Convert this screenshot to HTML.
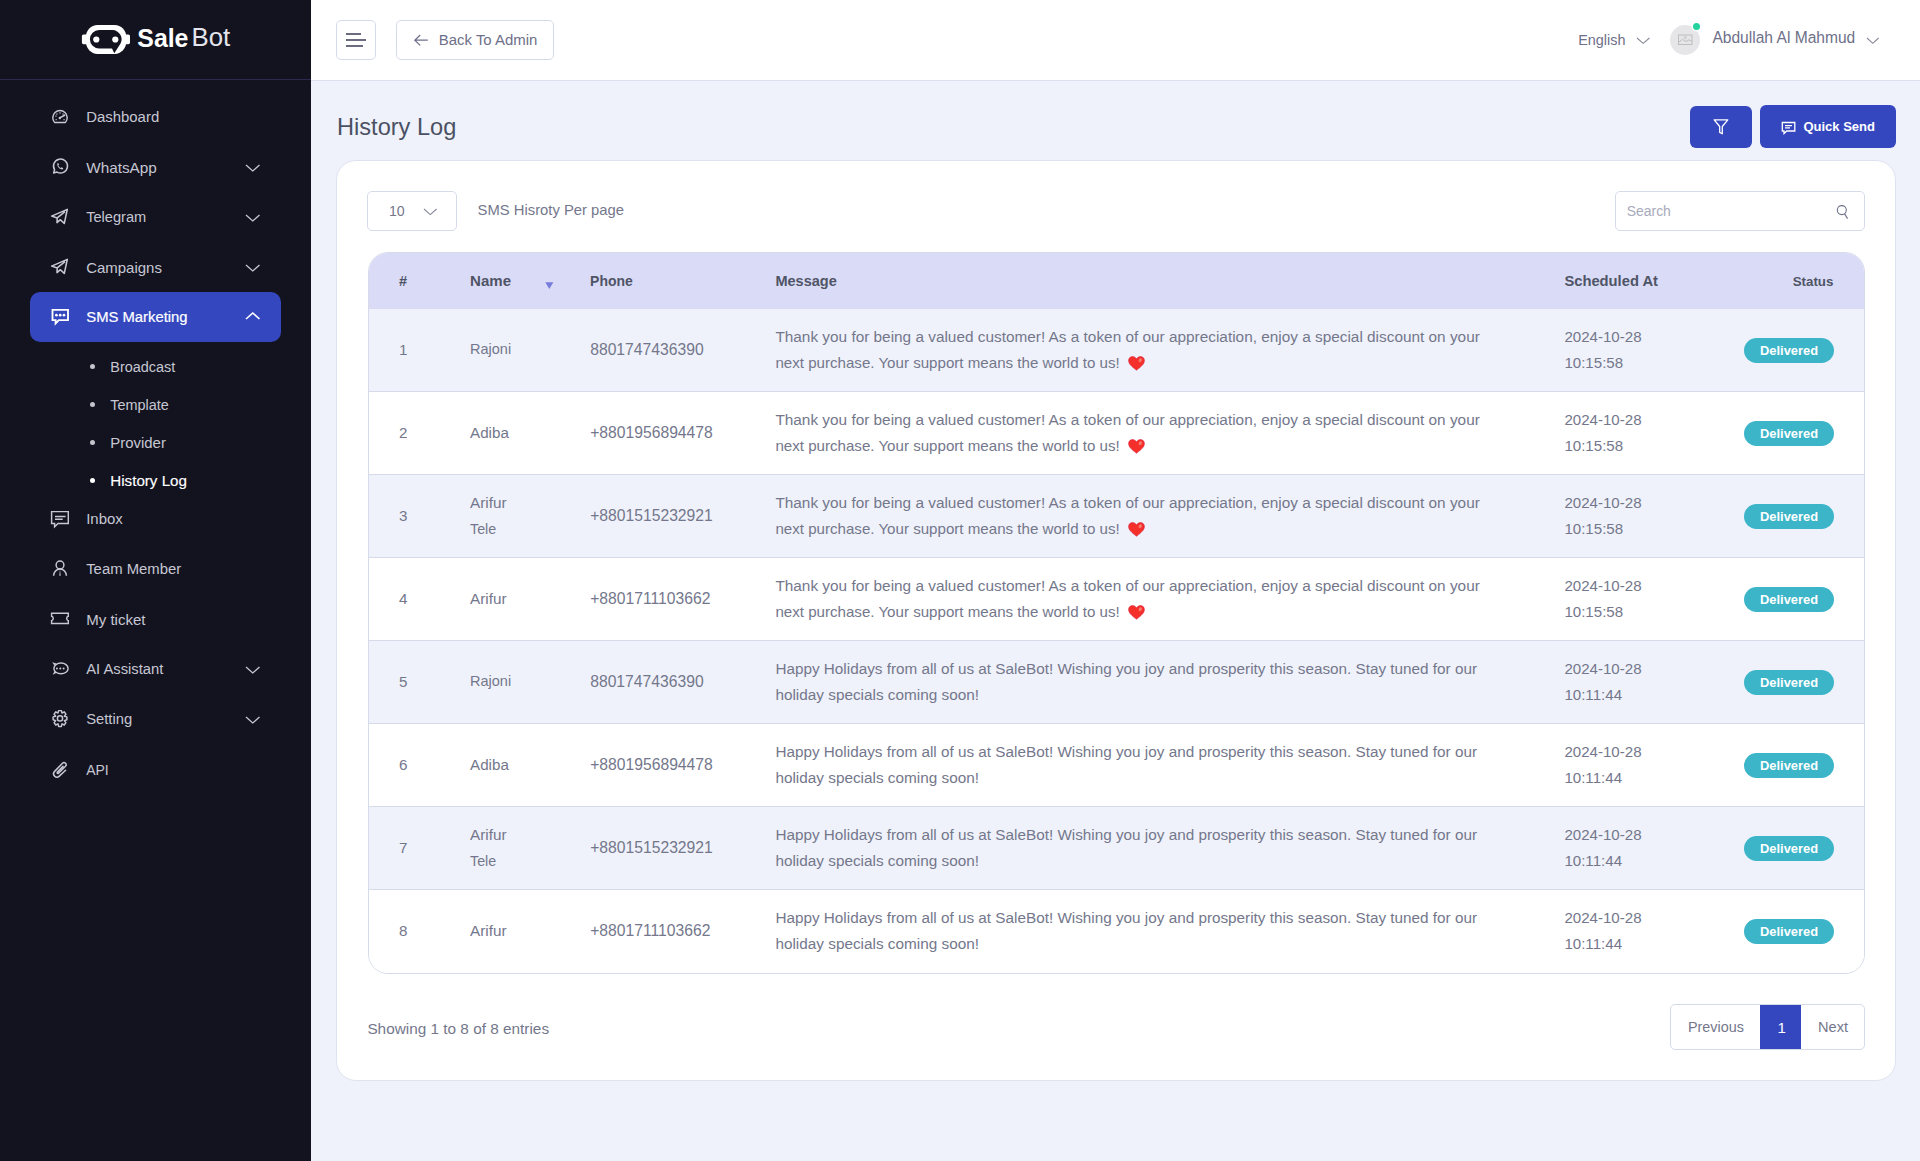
<!DOCTYPE html>
<html><head><meta charset="utf-8"><title>History Log</title>
<style>
html,body{margin:0;padding:0}
body{width:1920px;height:1161px;position:relative;overflow:hidden;background:#eff2fa;font-family:"Liberation Sans",sans-serif}
.t{position:absolute;white-space:nowrap;line-height:1}
svg{overflow:visible}
</style></head><body>
<div style="position:absolute;left:0;top:0;width:311px;height:1161px;background:#131320"></div>
<div style="position:absolute;left:0;top:79px;width:311px;height:1px;background:#2a2a50"></div>
<svg style="position:absolute;left:78px;top:20px" width="56" height="38" viewBox="0 0 56 38">
<rect x="3.9" y="14.4" width="6" height="9.8" rx="1.6" fill="#fff"/>
<rect x="46" y="14.4" width="6" height="9.8" rx="1.6" fill="#fff"/>
<rect x="7.9" y="4.9" width="40.4" height="29" rx="11.5" ry="12.5" fill="#fff"/>
<path d="M21.1 10.1 H34.7 A9.2 9.2 0 0 1 42.55 23.6 L36.3 33.2 L34 28.5 H21.1 A9.2 9.2 0 0 1 21.1 10.1 Z" fill="#131320"/>
<circle cx="18.3" cy="19.5" r="3.1" fill="#fff"/>
<circle cx="37.3" cy="19.5" r="3.1" fill="#fff"/>
</svg>
<div class="t" style="left:137.30px;top:26.05px;font-size:24.87px;color:#fff;font-weight:700;">Sale</div>
<div class="t" style="left:191.50px;top:25.26px;font-size:25.80px;color:#e4e4ec;">Bot</div>
<div class="t" style="left:86.20px;top:109.86px;font-size:14.93px;color:#c6c7d2;">Dashboard</div>
<div class="t" style="left:86.20px;top:159.53px;font-size:15.32px;color:#c6c7d2;">WhatsApp</div>
<div class="t" style="left:86.20px;top:210.14px;font-size:14.61px;color:#c6c7d2;">Telegram</div>
<div class="t" style="left:86.20px;top:259.82px;font-size:14.98px;color:#c6c7d2;">Campaigns</div>
<div style="position:absolute;left:30px;top:292px;width:251px;height:50px;border-radius:10px;background:#3547bf"></div>
<div class="t" style="left:86.30px;top:310.25px;font-size:14.82px;color:#fff;-webkit-text-stroke:0.2px #fff;">SMS Marketing</div>
<div style="position:absolute;left:89.9px;top:363.9px;width:5px;height:5px;border-radius:50%;background:#c4c4cc"></div>
<div class="t" style="left:110.30px;top:360.09px;font-size:14.43px;color:#c6c7d2;">Broadcast</div>
<div style="position:absolute;left:89.9px;top:401.9px;width:5px;height:5px;border-radius:50%;background:#c4c4cc"></div>
<div class="t" style="left:110.30px;top:398.08px;font-size:14.43px;color:#c6c7d2;">Template</div>
<div style="position:absolute;left:89.9px;top:439.9px;width:5px;height:5px;border-radius:50%;background:#c4c4cc"></div>
<div class="t" style="left:110.30px;top:435.66px;font-size:14.93px;color:#c6c7d2;">Provider</div>
<div style="position:absolute;left:89.9px;top:477.9px;width:5px;height:5px;border-radius:50%;background:#fff"></div>
<div class="t" style="left:110.30px;top:473.47px;font-size:15.16px;color:#fff;-webkit-text-stroke:0.15px #fff;">History Log</div>
<div class="t" style="left:86.20px;top:511.85px;font-size:14.95px;color:#c6c7d2;">Inbox</div>
<div class="t" style="left:86.20px;top:561.91px;font-size:14.87px;color:#c6c7d2;">Team Member</div>
<div class="t" style="left:86.20px;top:611.75px;font-size:15.06px;color:#c6c7d2;">My ticket</div>
<div class="t" style="left:86.20px;top:661.98px;font-size:14.79px;color:#c6c7d2;">AI Assistant</div>
<div class="t" style="left:86.20px;top:711.99px;font-size:14.78px;color:#c6c7d2;">Setting</div>
<div class="t" style="left:86.20px;top:762.64px;font-size:14.01px;color:#c6c7d2;">API</div>
<svg style="position:absolute;left:245.2px;top:164.0px" width="15.5" height="9"><path d="M1 1 L7.75 7 L14.5 1" fill="none" stroke="#c6c7d2" stroke-width="1.3"/></svg>
<svg style="position:absolute;left:245.2px;top:214.0px" width="15.5" height="9"><path d="M1 1 L7.75 7 L14.5 1" fill="none" stroke="#c6c7d2" stroke-width="1.3"/></svg>
<svg style="position:absolute;left:245.2px;top:264.0px" width="15.5" height="9"><path d="M1 1 L7.75 7 L14.5 1" fill="none" stroke="#c6c7d2" stroke-width="1.3"/></svg>
<svg style="position:absolute;left:245.2px;top:666.0px" width="15.5" height="9"><path d="M1 1 L7.75 7 L14.5 1" fill="none" stroke="#c6c7d2" stroke-width="1.3"/></svg>
<svg style="position:absolute;left:245.2px;top:716.0px" width="15.5" height="9"><path d="M1 1 L7.75 7 L14.5 1" fill="none" stroke="#c6c7d2" stroke-width="1.3"/></svg>
<svg style="position:absolute;left:245.2px;top:312.0px" width="15.5" height="9"><path d="M1 7 L7.75 1 L14.5 7" fill="none" stroke="#fff" stroke-width="1.6"/></svg>
<svg style="position:absolute;left:46px;top:104px" width="28" height="24" viewBox="0 0 28 24"><path d="M8.55 18.4 A7.2 7.2 0 1 1 19.45 18.4 Z" fill="none" stroke="#c6c7d2" stroke-width="1.45" stroke-linejoin="round"/><path d="M13.8 13.9 L18.6 11.2" stroke="#c6c7d2" stroke-width="1.65" stroke-linecap="round"/><circle cx="13.8" cy="14" r="1.2" fill="#c6c7d2"/><path d="M14 8.3v1.2M10.6 9.6l.7.9M17.4 9.6l-.7.9M9.4 12.2h1.1M9.6 15.6h1.1M17.5 15.6h1.1" stroke="#c6c7d2" stroke-width="1.25"/></svg>
<svg style="position:absolute;left:46px;top:154px" width="28" height="24" viewBox="0 0 28 24"><path d="M7.6 18.9 L8.6 15.8 A7 7 0 1 1 11 18.1 Z" fill="none" stroke="#c6c7d2" stroke-width="1.50" stroke-linejoin="round"/><path d="M11.3 9.4 C10.6 11.6 13.1 15.3 16.6 15.4 L17.3 14.2 L15.5 13.2 L14.6 13.9 C13.6 13.4 12.7 12.4 12.3 11.5 L13 10.6 L12.2 8.9 Z" fill="#c6c7d2"/></svg>
<svg style="position:absolute;left:46px;top:204px" width="28" height="24" viewBox="0 0 28 24"><path d="M5.6 12.1 L21.3 5.4 L18.3 19.4 L14.4 15.7 L11 18.6 L11.2 13.9 Z M11.2 13.9 L19 7.6" fill="none" stroke="#c6c7d2" stroke-width="1.55" stroke-linejoin="round"/></svg>
<svg style="position:absolute;left:46px;top:254px" width="28" height="24" viewBox="0 0 28 24"><path d="M5.6 12.1 L21.3 5.4 L18.3 19.4 L14.4 15.7 L11 18.6 L11.2 13.9 Z M11.2 13.9 L19 7.6" fill="none" stroke="#c6c7d2" stroke-width="1.55" stroke-linejoin="round"/></svg>
<svg style="position:absolute;left:46px;top:304px" width="28" height="24" viewBox="0 0 28 24"><path d="M6.5 5.8 H22 V16.1 H12.8 L9.6 19.4 V16.1 H6.5 Z" fill="none" stroke="#fff" stroke-width="1.85" stroke-linejoin="miter"/><circle cx="10.4" cy="11.2" r="1.35" fill="#fff"/><circle cx="14.2" cy="11.2" r="1.35" fill="#fff"/><circle cx="18" cy="11.2" r="1.35" fill="#fff"/></svg>
<svg style="position:absolute;left:46px;top:506px" width="28" height="24" viewBox="0 0 28 24"><path d="M5.6 5.6 H22.3 V17.4 H12 L8.6 20.8 V17.4 H5.6 Z" fill="none" stroke="#c6c7d2" stroke-width="1.45"/><path d="M9 10.5 H19.6 M9 13.2 H16.7" stroke="#c6c7d2" stroke-width="1.45"/></svg>
<svg style="position:absolute;left:46px;top:556px" width="28" height="24" viewBox="0 0 28 24"><circle cx="14" cy="8.9" r="3.9" fill="none" stroke="#c6c7d2" stroke-width="1.45"/><path d="M7.6 19.8 A6.4 6.8 0 0 1 20.4 19.8" fill="none" stroke="#c6c7d2" stroke-width="1.50"/><path d="M14 13.2 L13.3 19.8 H14.7 Z" fill="#c6c7d2"/></svg>
<svg style="position:absolute;left:46px;top:606px" width="28" height="24" viewBox="0 0 28 24"><path d="M5.6 7.3 H22.3 V10.2 A2.3 2.3 0 0 0 22.3 14.6 V17.5 H5.6 V14.6 A2.3 2.3 0 0 0 5.6 10.2 Z" fill="none" stroke="#c6c7d2" stroke-width="1.45"/></svg>
<svg style="position:absolute;left:46px;top:656px" width="28" height="24" viewBox="0 0 28 24"><ellipse cx="15" cy="12.4" rx="7.1" ry="5.4" fill="none" stroke="#c6c7d2" stroke-width="1.45"/><path d="M6.2 6.2 L10.6 7.6 L8.4 9.6 Z M6.6 18.8 L8.6 15 L10.8 16.8 Z" fill="#c6c7d2"/><circle cx="10.9" cy="12.4" r="1" fill="#c6c7d2"/><circle cx="14.3" cy="12.4" r="1" fill="#c6c7d2"/><circle cx="17.6" cy="12.4" r="1" fill="#c6c7d2"/></svg>
<svg style="position:absolute;left:46px;top:706px" width="28" height="24" viewBox="0 0 28 24"><path d="M12.6 4.6 H15.4 L16 7 L18.3 5.8 L19.9 8.2 L18.3 10.2 L20.9 10.9 V13.7 L18.3 14.6 L19.9 16.6 L18.3 19 L16 17.8 L15.4 20.4 H12.6 L12 17.8 L9.7 19 L8.1 16.6 L9.7 14.6 L7.1 13.7 V10.9 L9.7 10.2 L8.1 8.2 L9.7 5.8 L12 7 Z" fill="none" stroke="#c6c7d2" stroke-width="1.45" stroke-linejoin="round"/><circle cx="14" cy="12.4" r="2.6" fill="none" stroke="#c6c7d2" stroke-width="1.45"/></svg>
<svg style="position:absolute;left:46px;top:756px" width="28" height="24" viewBox="0 0 28 24"><path d="M19.6 14.2 L13.3 20.1 A3.3 3.3 0 0 1 8.6 15.4 L16.5 7.3 A2.1 2.1 0 0 1 19.5 10.3 L12.4 17.4 A.9 .9 0 0 1 11.2 16.2 L17 10.4" fill="none" stroke="#c6c7d2" stroke-width="1.50" stroke-linecap="round"/></svg>
<div style="position:absolute;left:311px;top:0;width:1609px;height:80px;background:#fff"></div>
<div style="position:absolute;left:311px;top:80px;width:1609px;height:1px;background:#dbdfee"></div>
<div style="position:absolute;left:336px;top:20px;width:38px;height:38px;border:1px solid #d6dbea;border-radius:5px"></div>
<div style="position:absolute;left:346px;top:33px;width:14.6px;height:1.6px;background:#6b6c80"></div>
<div style="position:absolute;left:346px;top:39.2px;width:20px;height:1.6px;background:#6b6c80"></div>
<div style="position:absolute;left:346px;top:45.2px;width:16.7px;height:1.6px;background:#6b6c80"></div>
<div style="position:absolute;left:396px;top:20px;width:156px;height:38px;border:1px solid #d6dbea;border-radius:5px"></div>
<svg style="position:absolute;left:413px;top:33px" width="16" height="14"><path d="M14.8 7.2 H2 M7.2 2 L1.8 7.2 L7.2 12.4" fill="none" stroke="#6e7089" stroke-width="1.2"/></svg>
<div class="t" style="left:438.75px;top:32.54px;font-size:14.96px;color:#6e7089;">Back To Admin</div>
<div class="t" style="left:1578.20px;top:32.54px;font-size:14.42px;color:#6e7089;">English</div>
<svg style="position:absolute;left:1636.0px;top:36.6px" width="14.4" height="8.3"><path d="M1 1 L7.2 6.3 L13.4 1" fill="none" stroke="#858799" stroke-width="1.05"/></svg>
<div style="position:absolute;left:1670px;top:24.8px;width:30px;height:30px;border-radius:50%;background:#e6e6e8"></div>
<svg style="position:absolute;left:1677px;top:33px" width="17" height="13"><rect x="1.5" y="2" width="13.5" height="9.5" fill="none" stroke="#bdbdc2" stroke-width="1"/><path d="M1.5 9.5 L5.5 6.5 L9 8.5 L12 6.8 L15 8.5" fill="none" stroke="#bdbdc2" stroke-width="1"/><circle cx="8.3" cy="4.6" r="1.1" fill="none" stroke="#bdbdc2" stroke-width=".8"/></svg>
<div style="position:absolute;left:1692.6px;top:22.6px;width:7.6px;height:7.6px;border-radius:50%;background:#24d29e;box-shadow:0 0 0 1.5px #fff;box-sizing:border-box"></div>
<div class="t" style="left:1712.40px;top:29.81px;font-size:15.59px;color:#6e7089;">Abdullah Al Mahmud</div>
<svg style="position:absolute;left:1866.2px;top:36.6px" width="13.6" height="8.3"><path d="M1 1 L6.8 6.3 L12.6 1" fill="none" stroke="#858799" stroke-width="1.05"/></svg>
<div class="t" style="left:337.00px;top:115.63px;font-size:23.60px;color:#4b5163;">History Log</div>
<div style="position:absolute;left:1690px;top:106px;width:62px;height:42px;border-radius:6px;background:#3547bf"></div>
<svg style="position:absolute;left:1712px;top:118px" width="18" height="18"><path d="M2.2 1.8 H15.8 L10.3 8.5 V15.8 L7.7 14.4 V8.5 Z" fill="none" stroke="#fff" stroke-width="1.3" stroke-linejoin="round"/></svg>
<div style="position:absolute;left:1760px;top:105px;width:136px;height:43px;border-radius:6px;background:#3547bf"></div>
<svg style="position:absolute;left:1780px;top:120px" width="17" height="15"><path d="M2.3 2.5 H14.8 V11 H6.8 L4 13.6 V11 H2.3 Z" fill="none" stroke="#fff" stroke-width="1.3"/><path d="M5 5.6 H12 M5 7.9 H10" stroke="#fff" stroke-width="1.2"/></svg>
<div class="t" style="left:1803.40px;top:119.98px;font-size:13.02px;color:#fff;font-weight:700;">Quick Send</div>
<div style="position:absolute;left:336px;top:160px;width:1558px;height:919px;border:1px solid #dfe3f0;border-radius:20px;background:#fff"></div>
<div style="position:absolute;left:367px;top:191px;width:88px;height:38px;border:1px solid #d6dbea;border-radius:5px"></div>
<div class="t" style="left:388.90px;top:204.03px;font-size:14.14px;color:#74778c;">10</div>
<svg style="position:absolute;left:422.9px;top:208.4px" width="14.6" height="8.6"><path d="M1 1 L7.3 6.6 L13.6 1" fill="none" stroke="#858799" stroke-width="1.05"/></svg>
<div class="t" style="left:477.60px;top:203.38px;font-size:14.80px;color:#74778c;">SMS Hisroty Per page</div>
<div style="position:absolute;left:1615px;top:191px;width:248px;height:38px;border:1px solid #d6dbea;border-radius:5px"></div>
<div class="t" style="left:1626.70px;top:205.40px;font-size:13.94px;color:#a7aabb;">Search</div>
<svg style="position:absolute;left:1834px;top:204px" width="16" height="17"><circle cx="7.8" cy="6.1" r="4.5" fill="none" stroke="#6e7089" stroke-width="1.1"/><path d="M10.6 9.9 L13.6 14.6" stroke="#6e7089" stroke-width="1.1"/></svg>
<div style="position:absolute;left:368px;top:252px;width:1497px;height:722px;border-radius:20px;overflow:hidden;border:1px solid #d6dbea;box-sizing:border-box">
<div style="position:absolute;left:0;top:0;right:0;height:56px;background:#dadcf7"></div>
<div style="position:absolute;left:0;top:56px;right:0;height:83px;background:#eff2fa"></div>
<div style="position:absolute;left:0;top:139px;right:0;height:83px;background:#fff"></div>
<div style="position:absolute;left:0;top:138px;right:0;height:1px;background:#d6dbea"></div>
<div style="position:absolute;left:0;top:222px;right:0;height:83px;background:#eff2fa"></div>
<div style="position:absolute;left:0;top:221px;right:0;height:1px;background:#d6dbea"></div>
<div style="position:absolute;left:0;top:305px;right:0;height:83px;background:#fff"></div>
<div style="position:absolute;left:0;top:304px;right:0;height:1px;background:#d6dbea"></div>
<div style="position:absolute;left:0;top:388px;right:0;height:83px;background:#eff2fa"></div>
<div style="position:absolute;left:0;top:387px;right:0;height:1px;background:#d6dbea"></div>
<div style="position:absolute;left:0;top:471px;right:0;height:83px;background:#fff"></div>
<div style="position:absolute;left:0;top:470px;right:0;height:1px;background:#d6dbea"></div>
<div style="position:absolute;left:0;top:554px;right:0;height:83px;background:#eff2fa"></div>
<div style="position:absolute;left:0;top:553px;right:0;height:1px;background:#d6dbea"></div>
<div style="position:absolute;left:0;top:637px;right:0;height:83px;background:#fff"></div>
<div style="position:absolute;left:0;top:636px;right:0;height:1px;background:#d6dbea"></div>
</div>
<div class="t" style="left:398.90px;top:273.73px;font-size:14.50px;color:#4f5466;font-weight:700;">#</div>
<div class="t" style="left:470.10px;top:273.26px;font-size:15.05px;color:#4f5466;font-weight:700;">Name</div>
<svg style="position:absolute;left:544px;top:281px" width="11" height="9"><path d="M1.3 1.3 H9.3 L5.3 8 Z" fill="#777cdc"/></svg>
<div class="t" style="left:590.10px;top:274.17px;font-size:13.98px;color:#4f5466;font-weight:700;">Phone</div>
<div class="t" style="left:775.40px;top:273.70px;font-size:14.53px;color:#4f5466;font-weight:700;">Message</div>
<div class="t" style="left:1564.40px;top:273.52px;font-size:14.74px;color:#4f5466;font-weight:700;">Scheduled At</div>
<div class="t" style="left:1792.70px;top:274.72px;font-size:13.32px;color:#4f5466;font-weight:700;">Status</div>
<div class="t" style="left:399.00px;top:341.83px;font-size:15.20px;color:#74778c;">1</div>
<div class="t" style="left:470.00px;top:342.43px;font-size:14.50px;color:#74778c;">Rajoni</div>
<div class="t" style="left:590.20px;top:342.01px;font-size:15.70px;color:#74778c;">8801747436390</div>
<div class="t" style="left:775.40px;top:329.40px;font-size:15.36px;color:#74778c;">Thank you for being a valued customer! As a token of our appreciation, enjoy a special discount on your</div>
<div class="t" style="left:775.40px;top:355.41px;font-size:15.11px;color:#74778c;">next purchase. Your support means the world to us!</div>
<svg style="position:absolute;left:1128px;top:355.8px" width="17" height="15" viewBox="0 0 17 15"><path d="M8.5 14.2 C4 10.8 0.6 8 0.6 4.6 C0.6 2.2 2.4 0.6 4.6 0.6 C6.3 0.6 7.7 1.6 8.5 3 C9.3 1.6 10.7 0.6 12.4 0.6 C14.6 0.6 16.4 2.2 16.4 4.6 C16.4 8 13 10.8 8.5 14.2 Z" fill="#f5302b" stroke="#d81f3c" stroke-width=".6"/><ellipse cx="12.3" cy="4.3" rx="1.5" ry="2.1" fill="#f47c6e" transform="rotate(30 12.3 4.3)"/></svg>
<div class="t" style="left:1564.40px;top:328.52px;font-size:15.09px;color:#74778c;">2024-10-28</div>
<div class="t" style="left:1564.40px;top:355.12px;font-size:15.10px;color:#74778c;">10:15:58</div>
<div style="position:absolute;left:1744px;top:338.0px;width:90px;height:25px;border-radius:13px;background:#3db5c9"></div>
<div class="t" style="left:1760.00px;top:344.68px;font-size:12.90px;color:#fff;font-weight:700;">Delivered</div>
<div class="t" style="left:399.00px;top:424.83px;font-size:15.20px;color:#74778c;">2</div>
<div class="t" style="left:470.00px;top:424.83px;font-size:15.20px;color:#74778c;">Adiba</div>
<div class="t" style="left:590.20px;top:425.01px;font-size:15.70px;color:#74778c;">+8801956894478</div>
<div class="t" style="left:775.40px;top:412.40px;font-size:15.36px;color:#74778c;">Thank you for being a valued customer! As a token of our appreciation, enjoy a special discount on your</div>
<div class="t" style="left:775.40px;top:438.41px;font-size:15.11px;color:#74778c;">next purchase. Your support means the world to us!</div>
<svg style="position:absolute;left:1128px;top:438.8px" width="17" height="15" viewBox="0 0 17 15"><path d="M8.5 14.2 C4 10.8 0.6 8 0.6 4.6 C0.6 2.2 2.4 0.6 4.6 0.6 C6.3 0.6 7.7 1.6 8.5 3 C9.3 1.6 10.7 0.6 12.4 0.6 C14.6 0.6 16.4 2.2 16.4 4.6 C16.4 8 13 10.8 8.5 14.2 Z" fill="#f5302b" stroke="#d81f3c" stroke-width=".6"/><ellipse cx="12.3" cy="4.3" rx="1.5" ry="2.1" fill="#f47c6e" transform="rotate(30 12.3 4.3)"/></svg>
<div class="t" style="left:1564.40px;top:411.52px;font-size:15.09px;color:#74778c;">2024-10-28</div>
<div class="t" style="left:1564.40px;top:438.12px;font-size:15.10px;color:#74778c;">10:15:58</div>
<div style="position:absolute;left:1744px;top:421.0px;width:90px;height:25px;border-radius:13px;background:#3db5c9"></div>
<div class="t" style="left:1760.00px;top:427.68px;font-size:12.90px;color:#fff;font-weight:700;">Delivered</div>
<div class="t" style="left:399.00px;top:507.83px;font-size:15.20px;color:#74778c;">3</div>
<div class="t" style="left:470.00px;top:495.15px;font-size:15.30px;color:#74778c;">Arifur</div>
<div class="t" style="left:470.00px;top:521.80px;font-size:14.30px;color:#74778c;">Tele</div>
<div class="t" style="left:590.20px;top:508.01px;font-size:15.70px;color:#74778c;">+8801515232921</div>
<div class="t" style="left:775.40px;top:495.40px;font-size:15.36px;color:#74778c;">Thank you for being a valued customer! As a token of our appreciation, enjoy a special discount on your</div>
<div class="t" style="left:775.40px;top:521.41px;font-size:15.11px;color:#74778c;">next purchase. Your support means the world to us!</div>
<svg style="position:absolute;left:1128px;top:521.8px" width="17" height="15" viewBox="0 0 17 15"><path d="M8.5 14.2 C4 10.8 0.6 8 0.6 4.6 C0.6 2.2 2.4 0.6 4.6 0.6 C6.3 0.6 7.7 1.6 8.5 3 C9.3 1.6 10.7 0.6 12.4 0.6 C14.6 0.6 16.4 2.2 16.4 4.6 C16.4 8 13 10.8 8.5 14.2 Z" fill="#f5302b" stroke="#d81f3c" stroke-width=".6"/><ellipse cx="12.3" cy="4.3" rx="1.5" ry="2.1" fill="#f47c6e" transform="rotate(30 12.3 4.3)"/></svg>
<div class="t" style="left:1564.40px;top:494.52px;font-size:15.09px;color:#74778c;">2024-10-28</div>
<div class="t" style="left:1564.40px;top:521.12px;font-size:15.10px;color:#74778c;">10:15:58</div>
<div style="position:absolute;left:1744px;top:504.0px;width:90px;height:25px;border-radius:13px;background:#3db5c9"></div>
<div class="t" style="left:1760.00px;top:510.68px;font-size:12.90px;color:#fff;font-weight:700;">Delivered</div>
<div class="t" style="left:399.00px;top:590.83px;font-size:15.20px;color:#74778c;">4</div>
<div class="t" style="left:470.00px;top:590.75px;font-size:15.30px;color:#74778c;">Arifur</div>
<div class="t" style="left:590.20px;top:591.01px;font-size:15.70px;color:#74778c;">+8801711103662</div>
<div class="t" style="left:775.40px;top:578.40px;font-size:15.36px;color:#74778c;">Thank you for being a valued customer! As a token of our appreciation, enjoy a special discount on your</div>
<div class="t" style="left:775.40px;top:604.41px;font-size:15.11px;color:#74778c;">next purchase. Your support means the world to us!</div>
<svg style="position:absolute;left:1128px;top:604.8px" width="17" height="15" viewBox="0 0 17 15"><path d="M8.5 14.2 C4 10.8 0.6 8 0.6 4.6 C0.6 2.2 2.4 0.6 4.6 0.6 C6.3 0.6 7.7 1.6 8.5 3 C9.3 1.6 10.7 0.6 12.4 0.6 C14.6 0.6 16.4 2.2 16.4 4.6 C16.4 8 13 10.8 8.5 14.2 Z" fill="#f5302b" stroke="#d81f3c" stroke-width=".6"/><ellipse cx="12.3" cy="4.3" rx="1.5" ry="2.1" fill="#f47c6e" transform="rotate(30 12.3 4.3)"/></svg>
<div class="t" style="left:1564.40px;top:577.52px;font-size:15.09px;color:#74778c;">2024-10-28</div>
<div class="t" style="left:1564.40px;top:604.12px;font-size:15.10px;color:#74778c;">10:15:58</div>
<div style="position:absolute;left:1744px;top:587.0px;width:90px;height:25px;border-radius:13px;background:#3db5c9"></div>
<div class="t" style="left:1760.00px;top:593.68px;font-size:12.90px;color:#fff;font-weight:700;">Delivered</div>
<div class="t" style="left:399.00px;top:673.83px;font-size:15.20px;color:#74778c;">5</div>
<div class="t" style="left:470.00px;top:674.43px;font-size:14.50px;color:#74778c;">Rajoni</div>
<div class="t" style="left:590.20px;top:674.01px;font-size:15.70px;color:#74778c;">8801747436390</div>
<div class="t" style="left:775.40px;top:661.46px;font-size:15.29px;color:#74778c;">Happy Holidays from all of us at SaleBot! Wishing you joy and prosperity this season. Stay tuned for our</div>
<div class="t" style="left:775.40px;top:687.23px;font-size:15.33px;color:#74778c;">holiday specials coming soon!</div>
<div class="t" style="left:1564.40px;top:660.52px;font-size:15.09px;color:#74778c;">2024-10-28</div>
<div class="t" style="left:1564.40px;top:687.12px;font-size:15.10px;color:#74778c;">10:11:44</div>
<div style="position:absolute;left:1744px;top:670.0px;width:90px;height:25px;border-radius:13px;background:#3db5c9"></div>
<div class="t" style="left:1760.00px;top:676.68px;font-size:12.90px;color:#fff;font-weight:700;">Delivered</div>
<div class="t" style="left:399.00px;top:756.83px;font-size:15.20px;color:#74778c;">6</div>
<div class="t" style="left:470.00px;top:756.83px;font-size:15.20px;color:#74778c;">Adiba</div>
<div class="t" style="left:590.20px;top:757.01px;font-size:15.70px;color:#74778c;">+8801956894478</div>
<div class="t" style="left:775.40px;top:744.46px;font-size:15.29px;color:#74778c;">Happy Holidays from all of us at SaleBot! Wishing you joy and prosperity this season. Stay tuned for our</div>
<div class="t" style="left:775.40px;top:770.23px;font-size:15.33px;color:#74778c;">holiday specials coming soon!</div>
<div class="t" style="left:1564.40px;top:743.52px;font-size:15.09px;color:#74778c;">2024-10-28</div>
<div class="t" style="left:1564.40px;top:770.12px;font-size:15.10px;color:#74778c;">10:11:44</div>
<div style="position:absolute;left:1744px;top:753.0px;width:90px;height:25px;border-radius:13px;background:#3db5c9"></div>
<div class="t" style="left:1760.00px;top:759.68px;font-size:12.90px;color:#fff;font-weight:700;">Delivered</div>
<div class="t" style="left:399.00px;top:839.83px;font-size:15.20px;color:#74778c;">7</div>
<div class="t" style="left:470.00px;top:827.15px;font-size:15.30px;color:#74778c;">Arifur</div>
<div class="t" style="left:470.00px;top:853.80px;font-size:14.30px;color:#74778c;">Tele</div>
<div class="t" style="left:590.20px;top:840.01px;font-size:15.70px;color:#74778c;">+8801515232921</div>
<div class="t" style="left:775.40px;top:827.46px;font-size:15.29px;color:#74778c;">Happy Holidays from all of us at SaleBot! Wishing you joy and prosperity this season. Stay tuned for our</div>
<div class="t" style="left:775.40px;top:853.23px;font-size:15.33px;color:#74778c;">holiday specials coming soon!</div>
<div class="t" style="left:1564.40px;top:826.52px;font-size:15.09px;color:#74778c;">2024-10-28</div>
<div class="t" style="left:1564.40px;top:853.12px;font-size:15.10px;color:#74778c;">10:11:44</div>
<div style="position:absolute;left:1744px;top:836.0px;width:90px;height:25px;border-radius:13px;background:#3db5c9"></div>
<div class="t" style="left:1760.00px;top:842.68px;font-size:12.90px;color:#fff;font-weight:700;">Delivered</div>
<div class="t" style="left:399.00px;top:922.83px;font-size:15.20px;color:#74778c;">8</div>
<div class="t" style="left:470.00px;top:922.75px;font-size:15.30px;color:#74778c;">Arifur</div>
<div class="t" style="left:590.20px;top:923.01px;font-size:15.70px;color:#74778c;">+8801711103662</div>
<div class="t" style="left:775.40px;top:910.46px;font-size:15.29px;color:#74778c;">Happy Holidays from all of us at SaleBot! Wishing you joy and prosperity this season. Stay tuned for our</div>
<div class="t" style="left:775.40px;top:936.23px;font-size:15.33px;color:#74778c;">holiday specials coming soon!</div>
<div class="t" style="left:1564.40px;top:909.52px;font-size:15.09px;color:#74778c;">2024-10-28</div>
<div class="t" style="left:1564.40px;top:936.12px;font-size:15.10px;color:#74778c;">10:11:44</div>
<div style="position:absolute;left:1744px;top:919.0px;width:90px;height:25px;border-radius:13px;background:#3db5c9"></div>
<div class="t" style="left:1760.00px;top:925.68px;font-size:12.90px;color:#fff;font-weight:700;">Delivered</div>
<div class="t" style="left:367.40px;top:1021.41px;font-size:15.35px;color:#74778c;">Showing 1 to 8 of 8 entries</div>
<div style="position:absolute;left:1670px;top:1004px;width:193px;height:44px;border:1px solid #d6dbea;border-radius:5px"></div>
<div style="position:absolute;left:1760px;top:1005px;width:41px;height:44px;background:#3547bf"></div>
<div class="t" style="left:1688.00px;top:1020.24px;font-size:14.37px;color:#74778c;">Previous</div>
<div class="t" style="left:1777.50px;top:1019.70px;font-size:15.00px;color:#fff;">1</div>
<div class="t" style="left:1818.00px;top:1020.24px;font-size:14.60px;color:#74778c;">Next</div>
</body></html>
